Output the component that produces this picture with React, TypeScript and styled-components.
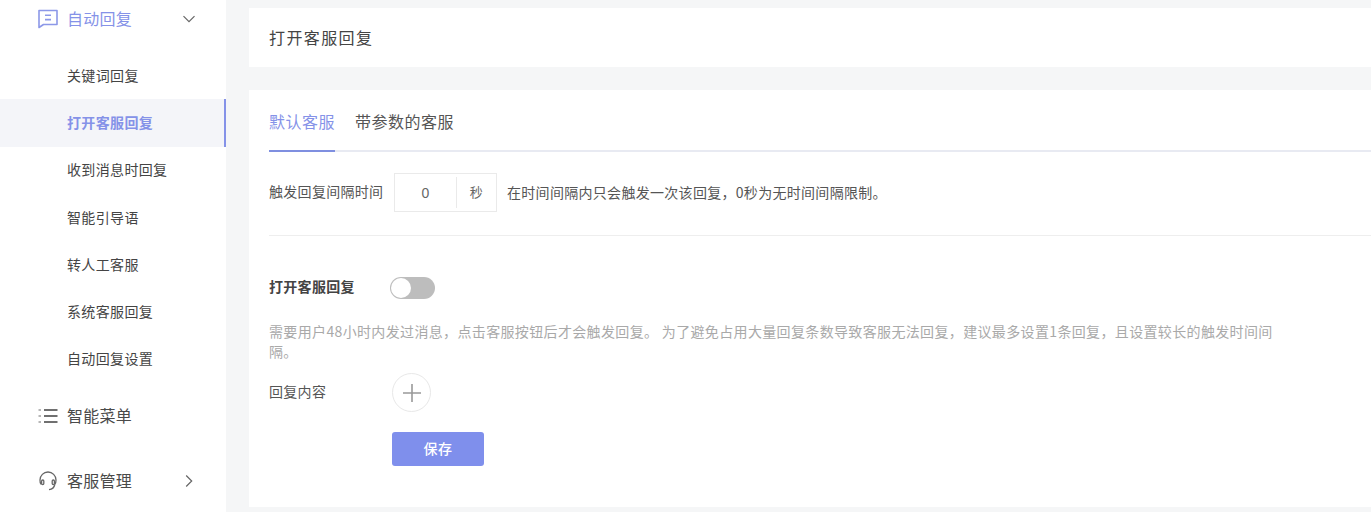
import React from "react";
import styled, { createGlobalStyle } from "styled-components";

const GlobalStyle = createGlobalStyle`
    html, body {
        margin: 0;
        padding: 0;
        height: 512px;
        overflow: hidden;
        background: #f5f6f7;
        font-family: "Noto Sans CJK SC", "Liberation Sans", sans-serif;
    }
`;

const Page = styled.div`
    display: flex;
    width: 1371px;
    height: 512px;
    overflow: hidden;
`;

const Sidebar = styled.div`
    width: 226px;
    flex-shrink: 0;
    background: #fff;
    display: flex;
    flex-direction: column;
    overflow: hidden;
`;

const MenuHead = styled.div<{ $height: number; $active?: boolean }>`
    height: ${(p) => p.$height}px;
    flex-shrink: 0;
    display: flex;
    align-items: center;
    padding: 0 31px 0 38px;
    font-size: 16px;
    letter-spacing: 0.25px;
    color: ${(p) => (p.$active ? "#8592e8" : "#4a4a4a")};
`;

const MenuIcon = styled.svg`
    width: 20px;
    height: 20px;
    margin-right: 9px;
    flex-shrink: 0;
`;

const MenuLabel = styled.span`
    flex: 1;
    padding-bottom: 2px;
`;

const SubList = styled.div`
    display: flex;
    flex-direction: column;
    flex-shrink: 0;
    padding-top: 14px;
    margin-bottom: 9px;
`;

const SubItem = styled.div<{ $active?: boolean }>`
    height: 47.3px;
    flex-shrink: 0;
    display: flex;
    align-items: center;
    padding: 0 0 2px 67px;
    box-sizing: border-box;
    font-size: 14px;
    letter-spacing: 0.35px;
    font-weight: ${(p) => (p.$active ? 700 : 400)};
    color: ${(p) => (p.$active ? "#8592e8" : "#444")};
    background: ${(p) => (p.$active ? "#f4f5f9" : "transparent")};
    border-right: 2px solid ${(p) => (p.$active ? "#8592e8" : "transparent")};
`;

const Main = styled.div`
    flex: 1;
    min-width: 0;
    padding: 8px 0 5px 23px;
    display: flex;
    flex-direction: column;
    gap: 23px;
`;

const HeaderCard = styled.div`
    height: 59px;
    flex-shrink: 0;
    box-sizing: border-box;
    background: #fff;
    display: flex;
    align-items: center;
    padding: 0 0 2px 20px;
    font-size: 16px;
    letter-spacing: 1.4px;
    color: #444;
`;

const Card = styled.div`
    flex: 1;
    background: #fff;
    padding-left: 20px;
    display: flex;
    flex-direction: column;
`;

const Tabs = styled.div`
    display: flex;
    height: 62px;
    flex-shrink: 0;
    box-sizing: border-box;
    border-bottom: 2px solid #e8eaf2;
    gap: 20px;
`;

const Tab = styled.div<{ $active?: boolean }>`
    height: 62px;
    box-sizing: border-box;
    display: flex;
    align-items: center;
    padding-top: 2px;
    font-size: 16px;
    letter-spacing: 0.5px;
    color: ${(p) => (p.$active ? "#8592e8" : "#555")};
    border-bottom: 2px solid ${(p) => (p.$active ? "#7f8fe0" : "transparent")};
`;

const IntervalRow = styled.div`
    display: flex;
    align-items: center;
    height: 84px;
    flex-shrink: 0;
    box-sizing: border-box;
    border-bottom: 1px solid #eeeeee;
    font-size: 14px;
    letter-spacing: 0.3px;
    color: #555;
    padding-bottom: 2px;
`;

const IntervalLabel = styled.span`
    width: 125px;
    flex-shrink: 0;
    padding-bottom: 3px;
`;

const InputGroup = styled.div`
    width: 103px;
    height: 39px;
    box-sizing: border-box;
    border: 1px solid #eaeaea;
    display: flex;
    align-items: center;
    margin-right: 10px;
`;

const InputValue = styled.div`
    width: 61px;
    height: 31px;
    border-right: 1px solid #eaeaea;
    display: flex;
    align-items: center;
    justify-content: center;
    font-family: "Liberation Sans", sans-serif;
    font-size: 14px;
    color: #666;
`;

const InputUnit = styled.div`
    flex: 1;
    text-align: center;
    font-size: 13px;
    color: #666;
    padding-bottom: 2px;
`;

const IntervalNote = styled.span`
    padding-bottom: 1px;
`;

const SwitchRow = styled.div`
    display: flex;
    align-items: center;
    margin-top: 41px;
    height: 22px;
`;

const SwitchLabel = styled.span`
    width: 121px;
    font-size: 14px;
    letter-spacing: 0.3px;
    font-weight: 700;
    color: #444;
    padding-bottom: 4px;
`;

const Toggle = styled.div`
    width: 45px;
    height: 22px;
    border-radius: 11px;
    background: #bdbdbd;
    position: relative;
`;

const Knob = styled.div`
    position: absolute;
    left: 1px;
    top: 1px;
    width: 20px;
    height: 20px;
    border-radius: 50%;
    background: #fff;
`;

const Hint = styled.div`
    width: 1010px;
    margin-top: 22px;
    font-size: 14px;
    letter-spacing: 0.35px;
    line-height: 20px;
    color: #a9a9a9;
`;

const ContentRow = styled.div`
    display: flex;
    align-items: center;
    margin-top: 12px;
`;

const ContentLabel = styled.span`
    width: 123px;
    font-size: 14px;
    letter-spacing: 0.3px;
    color: #555;
    padding-bottom: 4px;
`;

const AddButton = styled.div`
    width: 39px;
    height: 39px;
    box-sizing: border-box;
    border: 1px solid #e8e8e8;
    border-radius: 50%;
    display: flex;
    align-items: center;
    justify-content: center;
`;

const SaveButton = styled.button`
    width: 92px;
    height: 34px;
    margin: 20px 0 0 123px;
    border: none;
    border-radius: 3px;
    background: #7f8fec;
    color: #fff;
    font-family: inherit;
    font-size: 14px;
    letter-spacing: 0.4px;
    font-weight: 500;
    padding: 0 0 3px;
`;

const subItems = ["关键词回复", "打开客服回复", "收到消息时回复", "智能引导语", "转人工客服", "系统客服回复", "自动回复设置"];

const ChatIcon = () => (
    <MenuIcon viewBox="0 0 20 20" fill="none" stroke="#8c98e8" strokeWidth="1.6">
        <path d="M1 1.5h18v14H5.5L1 18.5Z" strokeLinejoin="round" />
        <path d="M7 6.2h6M7 10.6h6" />
    </MenuIcon>
);

const ListIcon = () => (
    <MenuIcon viewBox="0 0 20 20" fill="none" stroke="#707070" strokeWidth="1.8">
        <path d="M6 4h13.5M6 10h13.5M6 16h13.5" />
        <path d="M0.5 4h2.5M0.5 10h2.5M0.5 16h2.5" strokeWidth="1.2" />
    </MenuIcon>
);

const HeadsetIcon = () => (
    <MenuIcon viewBox="0 0 20 20" fill="none" stroke="#666" strokeWidth="1.3">
        <path d="M3.2 13.5A7.4 7.4 0 0 1 2 9a8 8 0 0 1 16 0c0 1.6-.4 3.2-1.2 4.5" />
        <rect x="3.6" y="9" width="2.2" height="4.6" rx="1.1" />
        <rect x="14.2" y="9" width="2.2" height="4.6" rx="1.1" />
        <path d="M16.8 13.5c-.6 3-2.8 4.8-5.8 5.2" />
    </MenuIcon>
);

const Chevron = ({ dir }: { dir: "down" | "right" }) => (
    <svg width="12" height="12" viewBox="0 0 12 12" fill="none" stroke="#666" strokeWidth="1.2">
        <path d={dir === "down" ? "M.5 3.2 6 8.7 11.5 3.2" : "M3.2.5 8.7 6 3.2 11.5"} />
    </svg>
);

const App = () => {
    return (
        <Page>
            <GlobalStyle />
            <Sidebar>
                <MenuHead $height={38} $active>
                    <ChatIcon />
                    <MenuLabel>自动回复</MenuLabel>
                    <Chevron dir="down" />
                </MenuHead>
                <SubList>
                    {subItems.map((item, i) => (
                        <SubItem key={item} $active={i === 1}>{item}</SubItem>
                    ))}
                </SubList>
                <MenuHead $height={47}>
                    <ListIcon />
                    <MenuLabel>智能菜单</MenuLabel>
                </MenuHead>
                <MenuHead $height={84}>
                    <HeadsetIcon />
                    <MenuLabel>客服管理</MenuLabel>
                    <Chevron dir="right" />
                </MenuHead>
            </Sidebar>
            <Main>
                <HeaderCard>打开客服回复</HeaderCard>
                <Card>
                    <Tabs>
                        <Tab $active>默认客服</Tab>
                        <Tab>带参数的客服</Tab>
                    </Tabs>
                    <IntervalRow>
                        <IntervalLabel>触发回复间隔时间</IntervalLabel>
                        <InputGroup>
                            <InputValue>0</InputValue>
                            <InputUnit>秒</InputUnit>
                        </InputGroup>
                        <IntervalNote>在时间间隔内只会触发一次该回复，0秒为无时间间隔限制。</IntervalNote>
                    </IntervalRow>
                    <SwitchRow>
                        <SwitchLabel>打开客服回复</SwitchLabel>
                        <Toggle><Knob /></Toggle>
                    </SwitchRow>
                    <Hint>需要用户48小时内发过消息，点击客服按钮后才会触发回复。 为了避免占用大量回复条数导致客服无法回复，建议最多设置1条回复，且设置较长的触发时间间隔。</Hint>
                    <ContentRow>
                        <ContentLabel>回复内容</ContentLabel>
                        <AddButton>
                            <svg width="20" height="20" viewBox="0 0 20 20" stroke="#999" strokeWidth="1.6">
                                <path d="M10 1v18M1 10h18" />
                            </svg>
                        </AddButton>
                    </ContentRow>
                    <SaveButton>保存</SaveButton>
                </Card>
            </Main>
        </Page>
    );
};

export default App;
